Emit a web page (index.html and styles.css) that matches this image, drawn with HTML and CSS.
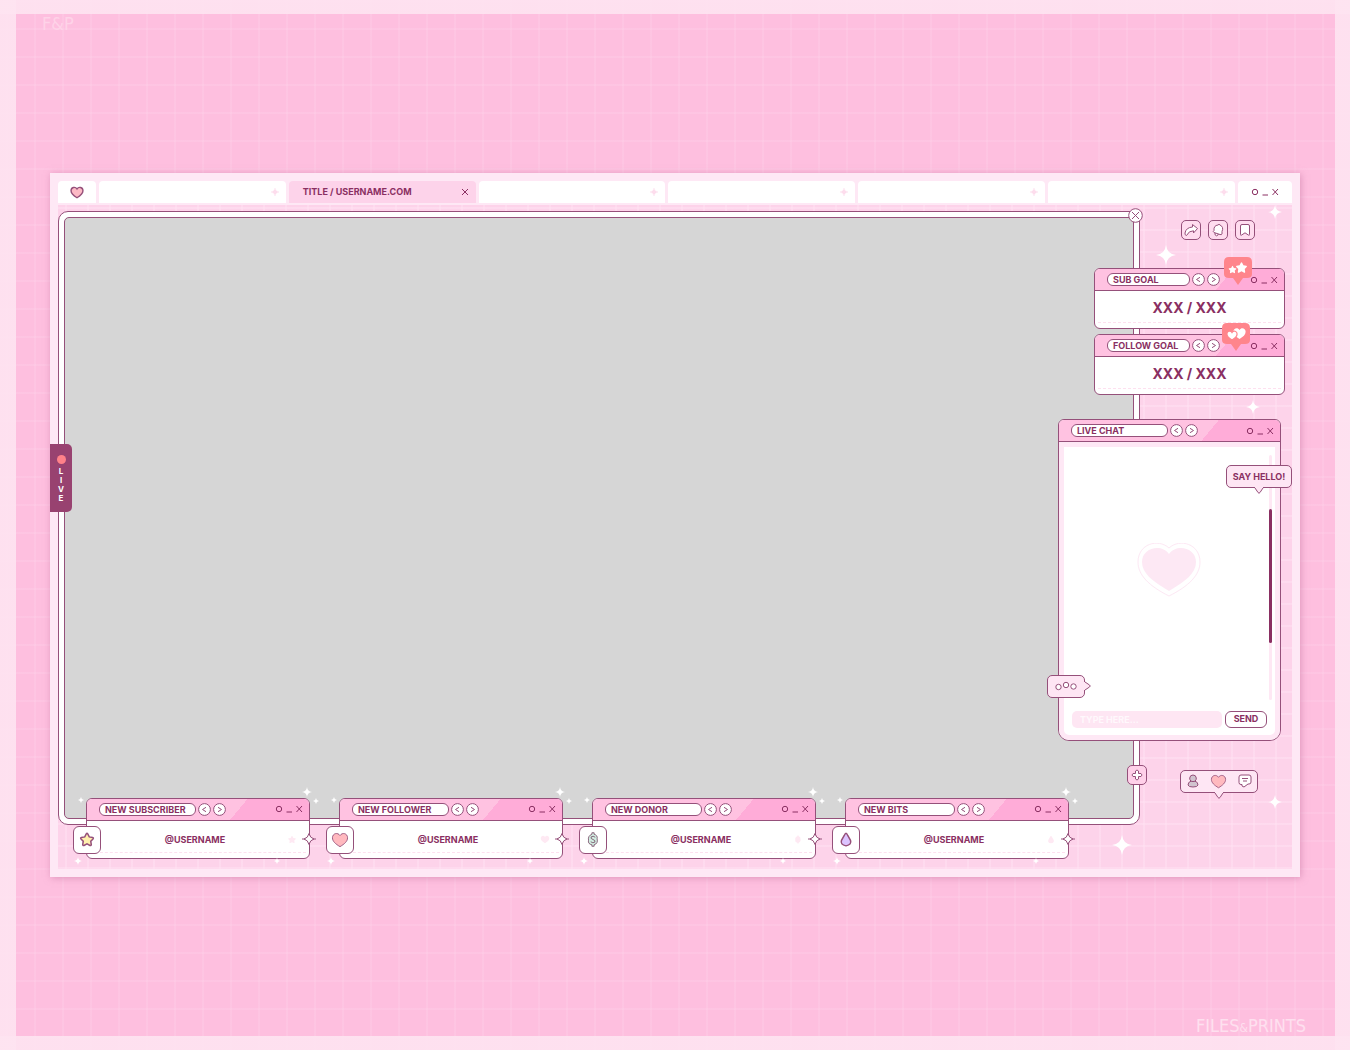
FILE: index.html
```html
<!DOCTYPE html>
<html lang="en">
<head>
<meta charset="utf-8">
<meta name="viewport" content="width=device-width, initial-scale=1">
<title>Stream overlay</title>
<link rel="stylesheet" href="styles.css">
</head>
<body>
<svg class="defs" aria-hidden="true">
  <symbol id="sparkle" viewBox="0 0 20 20"><path d="M10 0Q11 9 20 10Q11 11 10 20Q9 11 0 10Q9 9 10 0Z"/></symbol>
  <symbol id="heart" viewBox="0 0 20 18"><path d="M10 16.500C5 13.500 1.500 10.500 1.500 6.500C1.500 1.500 7.500 0 10 4C12.500 0 18.500 1.500 18.500 6.500C18.500 10.500 15 13.500 10 16.500Z"/></symbol>
  <symbol id="star" viewBox="0 0 20 20"><path d="M9 2.500Q10 1 11 2.500L13 6.500L17.500 7.200Q19.200 7.800 18 9.200L15 12.300L15.700 16.800Q15.600 18.500 14 18L10 15.900L6 18Q4.400 18.500 4.300 16.800L5 12.300L2 9.200Q.8 7.800 2.500 7.200L7 6.500Z"/></symbol>
  <symbol id="drop" viewBox="0 0 16 20"><path d="M8 1.500Q9 1.500 10.500 5L14 11Q16 17 8 18.500Q0 17 2 11L5.500 5Q7 1.500 8 1.500Z"/></symbol>
  <symbol id="dollar" viewBox="0 0 16 20"><path d="M6.500 1H9.500V3Q14.500 4.500 13.500 9Q15 15.500 9.500 17V19H6.500V17Q1 16 2 11Q1 5 6.500 3Z"/><path d="M11 7Q8 4.500 5.500 6.500Q4.500 9 8 10Q11.500 11 10.500 13.500Q8 15.500 5 13"/></symbol>
  <symbol id="controls" viewBox="0 0 28 8"><circle cx="4" cy="4" r="2.700"/><path d="M11.500 7H17M21.500 1L27 7M27 1L21.500 7"/></symbol>
  <symbol id="left" viewBox="0 0 13 13"><circle cx="6.500" cy="6.500" r="5.900"/><path d="M8 4.300L4.500 6.500L8 8.700"/></symbol>
  <symbol id="right" viewBox="0 0 13 13"><circle cx="6.500" cy="6.500" r="5.900"/><path d="M5 4.300L8.500 6.500L5 8.700"/></symbol>
  <symbol id="edge" viewBox="0 0 14 14"><path d="M0 7H14"/><path class="fill" d="M7 1.500Q8 6 12 7Q8 8 7 12.500Q6 8 2 7Q6 6 7 1.500Z"/></symbol>
</svg>

<div class="poster">
  <header class="mark mark-top">F&amp;P</header>

  <main class="window">
    <nav class="tabs" aria-label="Tabs">
      <a class="tab tab-home" href="#" aria-label="Home"><svg class="home-heart"><use href="#heart"/></svg></a>
      <a class="tab" href="#" aria-label="New tab"><svg class="plus"><use href="#sparkle"/></svg></a>
      <a class="tab tab-active" href="#"><span>TITLE / USERNAME.COM</span><svg class="x" viewBox="0 0 8 8"><path d="M1 1L7 7M7 1L1 7"/></svg></a>
      <a class="tab" href="#" aria-label="New tab"><svg class="plus"><use href="#sparkle"/></svg></a>
      <a class="tab" href="#" aria-label="New tab"><svg class="plus"><use href="#sparkle"/></svg></a>
      <a class="tab" href="#" aria-label="New tab"><svg class="plus"><use href="#sparkle"/></svg></a>
      <a class="tab" href="#" aria-label="New tab"><svg class="plus"><use href="#sparkle"/></svg></a>
      <span class="tab tab-controls"><svg class="controls"><use href="#controls"/></svg></span>
    </nav>

    <div class="workspace">
      <svg class="spark spark-a"><use href="#sparkle"/></svg>
      <svg class="spark spark-b"><use href="#sparkle"/></svg>
      <svg class="spark spark-c"><use href="#sparkle"/></svg>
      <svg class="spark spark-d"><use href="#sparkle"/></svg>
      <svg class="spark spark-e"><use href="#sparkle"/></svg>

      <section class="frame" aria-label="Stream">
        <div class="screen"></div>
        <button class="frame-close" aria-label="Close"><svg viewBox="0 0 15 15"><circle cx="7.500" cy="7.500" r="6.800"/><path d="M4 4L11 11M11 4L4 11"/></svg></button>
        <button class="frame-add" aria-label="Add"><svg viewBox="0 0 12 12"><path d="M4.500 4.500V2Q6 0 7.500 2V4.500H10Q12 6 10 7.500H7.500V10Q6 12 4.500 10V7.500H2Q0 6 2 4.500Z"/></svg></button>
      </section>
      <div class="live"><i></i><span>L</span><span>I</span><span>V</span><span>E</span></div>

      <aside class="side">
        <div class="tools">
          <button aria-label="Share"><svg viewBox="0 0 14 14"><path d="M8.500 1.500L13.500 5.500L9.500 10V7.800Q5 7.500 2.500 12.500Q.5 12 1 10Q2 4.500 8.500 4Z"/></svg></button>
          <button aria-label="Alerts"><svg viewBox="0 0 14 14"><path d="M3 7.500Q2.500 2.500 7 2Q8 .5 9 2Q13 4 11 8.500L11 11Q10.500 12 9 11.500L3 9.500Q1.500 8.500 3 7.500ZM4 10Q3.500 12.500 5.500 12.800Q7 12.800 7.300 11"/></svg></button>
          <button aria-label="Bookmark"><svg viewBox="0 0 14 14"><path d="M2.500 3Q2.500 1.500 4 1.500H10Q11.500 1.500 11.500 3V11.500Q11.500 12.800 10.300 12L7 9.800L3.700 12Q2.500 12.800 2.500 11.500Z"/></svg></button>
        </div>

        <section class="card goal">
          <header class="bar"><h2>SUB GOAL</h2><button aria-label="Previous"><svg><use href="#left"/></svg></button><button aria-label="Next"><svg><use href="#right"/></svg></button><svg class="controls"><use href="#controls"/></svg></header>
          <p class="count">XXX / XXX</p>
          <svg class="flag" viewBox="0 0 28 29"><path class="coral" d="M5 0H23Q28 0 28 5V17Q28 21 23 21H19L14 28L9 21H5Q0 21 0 17V5Q0 0 5 0Z"/><use href="#star" x="4" y="8" width="9" height="9"/><use href="#star" x="11" y="4" width="13" height="13"/></svg>
        </section>

        <section class="card goal goal-follow">
          <header class="bar"><h2>FOLLOW GOAL</h2><button aria-label="Previous"><svg><use href="#left"/></svg></button><button aria-label="Next"><svg><use href="#right"/></svg></button><svg class="controls"><use href="#controls"/></svg></header>
          <p class="count">XXX / XXX</p>
          <svg class="flag" viewBox="0 0 28 29"><path class="coral" d="M5 0H23Q28 0 28 5V17Q28 21 23 21H19L14 28L9 21H5Q0 21 0 17V5Q0 0 5 0Z"/><use href="#heart" x="10" y="4" width="15" height="13"/><use class="outlined" href="#heart" x="4" y="7" width="12" height="11"/></svg>
        </section>

        <section class="card chat">
          <header class="bar"><h2>LIVE CHAT</h2><button aria-label="Previous"><svg><use href="#left"/></svg></button><button aria-label="Next"><svg><use href="#right"/></svg></button><svg class="controls"><use href="#controls"/></svg></header>
          <div class="chat-body">
            <div class="log">
              <svg class="chat-heart" viewBox="0 0 64 54"><path class="ring" d="M32 53C12 43 1 32 1 19C1 1 21-5 32 5C43-5 63 1 63 19C63 32 52 43 32 53Z"/><path d="M32 48C15 38 5 30 5 19C5 5 24 0 32 11C40 0 59 5 59 19C59 30 49 38 32 48Z"/></svg>
              <div class="track"><div class="thumb"></div></div>
            </div>
            <form class="compose">
              <input type="text" placeholder="TYPE HERE..." aria-label="Message">
              <button type="button">SEND</button>
            </form>
          </div>
          <div class="bubble hello">SAY HELLO!<svg class="tail" viewBox="0 0 10 7"><path d="M0 0L1 1L4 5.500Q5 7 6 5.500L9 1L10 0"/></svg></div>
          <div class="bubble typing"><svg viewBox="0 0 22 10"><circle cx="3.500" cy="6" r="2.700"/><circle cx="11" cy="4" r="2.700"/><circle cx="18.500" cy="5.500" r="2.700"/></svg><svg class="tail-right" viewBox="0 0 7 12"><path d="M0 1L1 2L5.500 5Q7 6 5.500 7L1 10L0 11"/></svg></div>
        </section>

        <div class="bubble reactions">
          <button aria-label="Viewers"><svg class="person" viewBox="0 0 12 14"><path d="M1 11Q1 8 4 7.200Q2.500 5.800 2.700 4Q3 1 6 1Q9 1 9.300 4Q9.500 5.800 8 7.200Q11 8 11 11Q10.500 13 6 13Q1.500 13 1 11ZM4 7.200Q6 8 8 7.200"/></svg></button>
          <button aria-label="Like"><svg class="like"><use href="#heart"/></svg></button>
          <button aria-label="Comment"><svg class="comment" viewBox="0 0 14 14"><path d="M3 1H11Q13 1 13 3V8Q13 10 11 10H10L6 13L4 12V10.500H3Q1 10.500 1 8.500V3Q1 1 3 1ZM4 4.500H10M5 7H9"/></svg></button>
          <svg class="tail" viewBox="0 0 10 7"><path d="M0 0L1 1L4 5.500Q5 7 6 5.500L9 1L10 0"/></svg>
        </div>
      </aside>

      <div class="alerts">
        <section class="card alert">
          <header class="bar"><h2>NEW SUBSCRIBER</h2><button aria-label="Previous"><svg><use href="#left"/></svg></button><button aria-label="Next"><svg><use href="#right"/></svg></button><svg class="controls"><use href="#controls"/></svg></header>
          <p class="user">@USERNAME</p>
          <span class="badge star"><svg><use href="#star"/></svg></span>
          <svg class="ghost"><use href="#star"/></svg><svg class="edge"><use href="#edge"/></svg>
          <svg class="spark s1"><use href="#sparkle"/></svg><svg class="spark s2"><use href="#sparkle"/></svg><svg class="spark s3"><use href="#sparkle"/></svg><svg class="spark s4"><use href="#sparkle"/></svg><svg class="spark s5"><use href="#sparkle"/></svg>
        </section>
        <section class="card alert">
          <header class="bar"><h2>NEW FOLLOWER</h2><button aria-label="Previous"><svg><use href="#left"/></svg></button><button aria-label="Next"><svg><use href="#right"/></svg></button><svg class="controls"><use href="#controls"/></svg></header>
          <p class="user">@USERNAME</p>
          <span class="badge love"><svg><use href="#heart"/></svg></span>
          <svg class="ghost"><use href="#heart"/></svg><svg class="edge"><use href="#edge"/></svg>
          <svg class="spark s1"><use href="#sparkle"/></svg><svg class="spark s2"><use href="#sparkle"/></svg><svg class="spark s3"><use href="#sparkle"/></svg><svg class="spark s4"><use href="#sparkle"/></svg><svg class="spark s5"><use href="#sparkle"/></svg>
        </section>
        <section class="card alert">
          <header class="bar"><h2>NEW DONOR</h2><button aria-label="Previous"><svg><use href="#left"/></svg></button><button aria-label="Next"><svg><use href="#right"/></svg></button><svg class="controls"><use href="#controls"/></svg></header>
          <p class="user">@USERNAME</p>
          <span class="badge money"><svg><use href="#dollar"/></svg></span>
          <svg class="ghost"><use href="#dollar"/></svg><svg class="edge"><use href="#edge"/></svg>
          <svg class="spark s1"><use href="#sparkle"/></svg><svg class="spark s2"><use href="#sparkle"/></svg><svg class="spark s3"><use href="#sparkle"/></svg><svg class="spark s4"><use href="#sparkle"/></svg><svg class="spark s5"><use href="#sparkle"/></svg>
        </section>
        <section class="card alert">
          <header class="bar"><h2>NEW BITS</h2><button aria-label="Previous"><svg><use href="#left"/></svg></button><button aria-label="Next"><svg><use href="#right"/></svg></button><svg class="controls"><use href="#controls"/></svg></header>
          <p class="user">@USERNAME</p>
          <span class="badge bits"><svg><use href="#drop"/></svg></span>
          <svg class="ghost"><use href="#drop"/></svg><svg class="edge"><use href="#edge"/></svg>
          <svg class="spark s1"><use href="#sparkle"/></svg><svg class="spark s2"><use href="#sparkle"/></svg><svg class="spark s3"><use href="#sparkle"/></svg><svg class="spark s4"><use href="#sparkle"/></svg><svg class="spark s5"><use href="#sparkle"/></svg>
        </section>
      </div>
    </div>
  </main>

  <footer class="mark mark-bottom">FILES<small>&amp;</small>PRINTS</footer>
</div>
</body>
</html>
```
FILE: styles.css
```css
:root {
  --plum: #95507a;
  --text: #8a2f62;
  --pale: #fee8f5;
  --pink: #fdd3ea;
}

* { box-sizing: border-box; }

body {
  margin: 0;
  font-family: Inter, "Open Sans", sans-serif;
  font-size: 9px;
  font-weight: 700;
  line-height: 12px;
  color: var(--text);
}

h2, p { margin: 0; font-size: inherit; }

button {
  display: flex;
  align-items: center;
  justify-content: center;
  padding: 0;
  border: 0;
  background: none;
  font: inherit;
  color: inherit;
}

svg { display: block; fill: none; stroke: var(--plum); }
.defs { position: absolute; width: 0; height: 0; }

/* Poster */
.poster {
  min-height: 100vh;
  display: flex;
  flex-direction: column;
  justify-content: space-between;
  padding: 14px 50px;
  background:
    linear-gradient(#fee4f1e6, #fee4f1e6) top / 100% 14px no-repeat,
    linear-gradient(#fee4f1e6, #fee4f1e6) bottom / 100% 14px no-repeat,
    linear-gradient(#fee4f1e6, #fee4f1e6) left / 16px 100% no-repeat,
    linear-gradient(#fee4f1e6, #fee4f1e6) right / 15px 100% no-repeat,
    linear-gradient(#ffd3e94d 2px, transparent 2px) 0 0 / 28px 28px,
    linear-gradient(90deg, #ffd3e94d 2px, transparent 2px) 6px 0 / 28px 28px,
    #febfdf;
}

.mark {
  height: 20px;
  font-family: "Liberation Sans Narrow", "DejaVu Sans Condensed", sans-serif;
  font-size: 18px;
  line-height: 20px;
  font-weight: 400;
  color: #fee0ef;
}
.mark small { font-size: 12px; line-height: 1; }
.mark-top { margin-left: -8px; color: #fed3e8; }
.mark-bottom { align-self: flex-end; margin-right: -6px; }

/* Browser window */
.window {
  display: flex;
  flex-direction: column;
  aspect-ratio: 16 / 9;
  padding: 8px;
  background: var(--pale);
  box-shadow: 1px 1px 7px #c878a499;
}

.tabs { display: flex; gap: 3px; height: 24px; padding-bottom: 2px; }
.tab {
  flex: 1;
  display: flex;
  align-items: center;
  justify-content: flex-end;
  padding: 0 7px;
  border-radius: 4px 4px 0 0;
  background: #fff;
  color: inherit;
  text-decoration: none;
  white-space: nowrap;
}
.tab-home { flex: 0 0 38px; justify-content: center; }
.tab-active { justify-content: space-between; background: var(--pink); }
.tab-active span { margin-left: 7px; }
.tab-controls { flex: 0 0 54px; justify-content: center; }
.home-heart { width: 14px; height: 13px; fill: #fdb9c5; stroke-width: 2px; }
.plus { width: 8px; height: 8px; fill: #fddded; stroke: #fddded; }
.x { width: 8px; height: 8px; stroke: var(--text); }
.controls { width: 28px; height: 8px; stroke: var(--text); }

/* Overlapping layers share one grid cell */
.workspace {
  flex: 1;
  position: relative;
  display: grid;
  grid-template: minmax(0, 1fr) / minmax(0, 1fr);
  background:
    linear-gradient(#ffe2f280 2px, transparent 2px) 0 2px / 22px 22px,
    linear-gradient(90deg, #ffe2f280 2px, transparent 2px) 7px 0 / 22px 22px,
    var(--pink);
}
.workspace > section, .workspace > aside, .alerts { grid-area: 1 / 1; }

.frame {
  position: relative;
  margin: 6px 152px 44px 0;
  padding: 5px;
  display: grid;
  border: 1px solid var(--plum);
  border-radius: 10px;
  background: #fff;
}
.screen { border: 1px solid var(--plum); border-radius: 5px; background: #d6d6d6; }
.frame-close { position: absolute; top: -4px; right: -4px; width: 15px; height: 15px; }
.frame-close svg { width: 15px; height: 15px; fill: #fff; }
.frame-add {
  position: absolute;
  right: -8px;
  bottom: 39px;
  width: 20px;
  height: 20px;
  border: 1px solid var(--plum);
  border-radius: 5px;
  background: #ffd0e9;
}
.frame-add svg { width: 12px; height: 12px; fill: #fff; }

.live {
  position: absolute;
  left: -8px;
  top: 239px;
  width: 22px;
  height: 68px;
  display: flex;
  flex-direction: column;
  align-items: center;
  padding-top: 11px;
  border-radius: 0 5px 5px 0;
  background: #984270;
  color: #fff;
  font-size: 8px;
  line-height: 9px;
}
.live i { width: 9px; height: 9px; margin-bottom: 3px; border-radius: 50%; background: #ff8189; }

/* Decorative sparkles */
.spark { position: absolute; fill: #fff; stroke: none; }
.spark-a, .spark-e { width: 20px; height: 20px; }
.spark-b, .spark-c, .spark-d { width: 14px; height: 14px; }
.spark-a { right: 116px; top: 40px; }
.spark-b { right: 10px; top: 0; }
.spark-c { right: 32px; top: 195px; }
.spark-d { right: 10px; bottom: 60px; }
.spark-e { right: 160px; bottom: 14px; }

/* Cards */
.card {
  position: relative;
  display: flex;
  flex-direction: column;
  border: 1px solid var(--plum);
  border-radius: 6px;
  background: #fff;
}
.bar {
  display: flex;
  align-items: center;
  gap: 2px;
  height: 22px;
  padding: 0 6px 0 12px;
  border-bottom: 1px solid var(--plum);
  border-radius: 5px 5px 0 0;
  background: linear-gradient(130deg, #ffc2e1 67%, #ffacd8 67%);
}
.bar h2 {
  width: 97px;
  height: 13px;
  padding-left: 5px;
  border: 1px solid var(--plum);
  border-radius: 6px;
  background: #fff;
  line-height: 11px;
  white-space: nowrap;
}
.bar button svg { width: 13px; height: 13px; fill: #fff; }
.bar .controls { margin-left: auto; }

/* Sidebar */
.side {
  justify-self: end;
  position: relative;
  display: flex;
  flex-direction: column;
  align-items: flex-end;
  padding: 15px 7px 76px 0;
}
.tools { display: flex; gap: 7px; margin: 0 30px 28px 0; }
.tools button {
  width: 20px;
  height: 20px;
  border: 1px solid var(--plum);
  border-radius: 5px;
  background: #ffdcef;
}
.tools svg { width: 14px; height: 14px; fill: #fff; }

.goal { width: 191px; height: 61px; margin-bottom: 5px; }
.goal .bar h2 { width: 83px; }
.goal-follow { margin-bottom: 24px; }
.count, .user {
  flex: 1;
  display: flex;
  align-items: center;
  justify-content: center;
  margin: 0 3px 5px;
  border-bottom: 1px dashed #fde0ef;
}
.count { padding-top: 3px; font-size: 14px; }
.flag { position: absolute; top: -12px; right: 32px; width: 28px; height: 29px; fill: #fff; stroke: none; }
.goal-follow .flag { right: 34px; }
.flag .coral { fill: #ff858c; }
.flag .outlined { stroke: #ff858c; stroke-width: 2px; }

.chat { flex: 1; width: 223px; margin: 0 4px 29px 0; border-radius: 6px 6px 11px 11px; }
.chat-body {
  flex: 1;
  display: flex;
  flex-direction: column;
  border: 5px solid var(--pale);
  border-radius: 0 0 10px 10px;
  padding: 8px 3px 7px 8px;
}
.log {
  position: relative;
  flex: 1;
  display: grid;
  place-items: center;
  margin-bottom: 11px;
  padding: 0 6px 16px 0;
}
.chat-heart { width: 64px; height: 54px; fill: #fde8f4; stroke: none; }
.chat-heart .ring { fill: #fff; stroke: #fde8f4; }
.track { position: absolute; top: 0; right: 0; bottom: 0; width: 3px; border-radius: 2px; background: #fee8f4; }
.thumb { position: relative; top: 22%; height: 55%; border-radius: 2px; background: var(--text); }
.compose { display: flex; gap: 3px; margin-right: 5px; }
.compose input {
  flex: 1;
  min-width: 0;
  height: 17px;
  padding: 0 8px;
  border: 0;
  border-radius: 5px;
  background: #fee6f3;
  font: inherit;
  color: var(--text);
}
.compose input::placeholder { color: #fff8fc; opacity: 1; }
.compose button { width: 42px; height: 17px; border: 1px solid var(--plum); border-radius: 6px; background: #fff; }

.bubble {
  display: flex;
  align-items: center;
  justify-content: center;
  border: 1px solid var(--plum);
  border-radius: 5px;
  background: #fee6f4;
  white-space: nowrap;
}
.hello { position: absolute; top: 45px; right: -12px; width: 66px; height: 23px; }
.tail { position: absolute; top: 100%; left: 50%; width: 10px; height: 7px; margin-left: -5px; fill: #fee6f4; }
.typing { position: absolute; left: -12px; bottom: 42px; width: 38px; height: 23px; }
.typing svg { width: 22px; height: 10px; fill: #fff; }
.typing .tail-right { position: absolute; left: 100%; width: 7px; height: 12px; fill: #fee6f4; }
.reactions { position: relative; width: 78px; height: 23px; margin-right: 27px; gap: 11px; }
.person { width: 12px; height: 14px; fill: #d1c3cf; }
.like { width: 17px; height: 15px; fill: #ffb9bf; }
.comment { width: 14px; height: 14px; fill: #fff; }

/* Alerts */
.alerts {
  position: relative;
  align-self: end;
  display: grid;
  grid-template-columns: repeat(4, 1fr);
  gap: 29px;
  margin: 0 223px 10px 28px;
}
.alert { height: 61px; }
.user { padding: 7px 6px 0 0; }
.badge {
  position: absolute;
  left: -14px;
  top: 27px;
  width: 28px;
  height: 28px;
  display: grid;
  place-items: center;
  border: 1px solid var(--plum);
  border-radius: 6px;
  background: #fff;
}
.badge svg { width: 16px; height: 15px; stroke-width: 2px; }
.star svg { fill: #fff0ad; }
.love svg { width: 18px; height: 16px; fill: #ffb9bf; stroke-width: 1px; }
.money svg { fill: #d2eee2; stroke: #6b3a58; stroke-width: 1px; }
.bits svg { fill: #dcc4ff; }
.ghost { position: absolute; right: 12px; top: 36px; width: 10px; height: 9px; fill: #fee9f3; stroke: none; }
.edge { position: absolute; right: -7px; top: 33px; width: 14px; height: 14px; }
#edge .fill { fill: #fff; }
.s1, .s3, .s5 { width: 6px; height: 6px; }
.s2 { width: 10px; height: 10px; }
.s4 { width: 8px; height: 8px; }
.s1 { left: -9px; top: -2px; }
.s2 { right: -3px; top: -12px; }
.s3 { right: -10px; top: -1px; }
.s4 { left: -13px; bottom: -7px; }
.s5 { right: 29px; bottom: -6px; }
```
